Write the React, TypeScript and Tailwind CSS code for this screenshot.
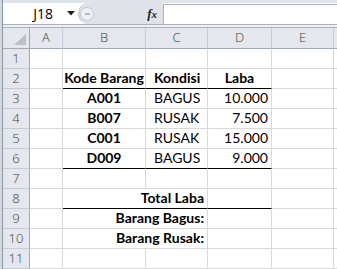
const cols = [
  { key: "A", w: "w-[33px]" },
  { key: "B", w: "w-[83px]" },
  { key: "C", w: "w-[62px]" },
  { key: "D", w: "w-[64px]" },
  { key: "E", w: "w-[62px]" },
];

const cellFont = "font-['Lato',sans-serif] text-[14px] text-black whitespace-nowrap";
const headFont = "font-['Open_Sans',sans-serif] text-[13px] text-[#3c3c3c] font-light";

type Row = {
  b?: string;
  c?: string;
  d?: string;
  merged?: string;
  line?: boolean;
  head?: boolean;
};

const rows: Row[] = [
  {},
  { b: "Kode Barang", c: "Kondisi", d: "Laba", line: true, head: true },
  { b: "A001", c: "BAGUS", d: "10.000" },
  { b: "B007", c: "RUSAK", d: "7.500" },
  { b: "C001", c: "RUSAK", d: "15.000" },
  { b: "D009", c: "BAGUS", d: "9.000", line: true },
  {},
  { merged: "Total Laba", line: true },
  { merged: "Barang Bagus:" },
  { merged: "Barang Rusak:" },
  {},
];

function DataRow({ n, r }: { n: number; r: Row }) {
  const under = r.line ? "border-b-[1.5px] border-b-black" : "border-b border-b-[#d9d9d9]";
  return (
    <div className="flex h-[20px]">
      <div className={`w-[27px] shrink-0 bg-[#e4e8ee] border-r border-r-[#9eabbb] border-b border-b-[#c5ccd6] flex items-center justify-center ${headFont}`}>
        {n}
      </div>
      <div className="w-[33px] shrink-0 border-r border-b border-[#d9d9d9]" />
      {r.merged ? (
        <div className={`w-[145px] shrink-0 border-r border-r-[#d9d9d9] ${under} flex items-end justify-end pr-[3px] font-bold ${cellFont}`}>
          {r.merged}
        </div>
      ) : (
        <>
          <div className={`w-[83px] shrink-0 border-r border-r-[#d9d9d9] ${under} flex items-end justify-center font-bold ${cellFont}`}>
            {r.b}
          </div>
          <div className={`w-[62px] shrink-0 border-r border-r-[#d9d9d9] ${under} flex items-end pl-[8px] ${r.head ? "font-bold" : "font-normal"} ${cellFont}`}>
            {r.c}
          </div>
        </>
      )}
      <div
        className={`w-[64px] shrink-0 border-r border-r-[#d9d9d9] ${under} flex items-end ${
          r.head ? "justify-center font-bold" : "justify-end pr-[3px]"
        } ${cellFont}`}
      >
        {r.d}
      </div>
      <div className="w-[62px] shrink-0 border-r border-b border-[#d9d9d9]" />
      <div className="flex-1 border-b border-[#d9d9d9]" />
    </div>
  );
}

export default function App() {
  return (
    <div className="w-[337px] h-[269px] overflow-hidden bg-white flex">
      <div className="w-[3px] shrink-0 bg-[#d3d9e1] border-r border-r-[#8c96a3]" />

      <div className="flex-1 flex flex-col">
        {/* formula bar */}
        <div className="h-[3px] bg-[#dfe4ea]" />
        <div className="h-[22px] flex items-stretch bg-white border-b border-b-[#a7b0bc]">
          <div className="w-[55px] flex items-center justify-end pr-[5px] text-[14px] text-black font-['Open_Sans',sans-serif]">
            J18
          </div>
          <div className="w-[17px] flex items-center justify-end">
            <svg width="8" height="5" viewBox="0 0 8 5">
              <path d="M0 0H8L4 4.5Z" fill="#222" />
            </svg>
          </div>
          <div className="w-[85px] ml-[3px] bg-[#dfe3e9] rounded-l-full flex items-center border-l border-l-[#b8c0ca]">
            <div className="w-[14px] h-[14px] ml-[1px] rounded-full bg-[#edf0f4] border border-[#c2c9d2] flex items-center justify-center">
              <div className="w-[5px] h-[2px] bg-[#b0b8c2]" />
            </div>
            <div className="flex-1" />
            <span className="mr-[6px] text-[13px] italic font-bold text-[#222] font-['Liberation_Serif',serif]">
              f<span className="text-[11px]">x</span>
            </span>
          </div>
          <div className="flex-1 border-l border-l-[#aeb6c1] border-t border-t-[#aeb6c1] mt-[1px]" />
        </div>
        <div className="h-[3px] bg-[#eef1f4] border-b border-b-[#a9b2bd]" />

        {/* column headers */}
        <div className="flex h-[21px] bg-[#e4e8ee]">
          <div className="w-[27px] shrink-0 border-r border-r-[#9eabbb] border-b border-b-[#9eabbb] relative">
            <svg className="absolute right-[3px] bottom-[3px]" width="12" height="11" viewBox="0 0 12 11">
              <path d="M12 0V11H0Z" fill="#b9c0c9" />
            </svg>
          </div>
          {cols.map((c) => (
            <div
              key={c.key}
              className={`${c.w} shrink-0 border-r border-r-[#c5ccd6] border-b border-b-[#9eabbb] flex items-center justify-center ${headFont}`}
            >
              {c.key}
            </div>
          ))}
          <div className="flex-1 border-b border-b-[#9eabbb]" />
        </div>

        {rows.map((r, i) => (
          <DataRow key={i} n={i + 1} r={r} />
        ))}
      </div>
    </div>
  );
}
